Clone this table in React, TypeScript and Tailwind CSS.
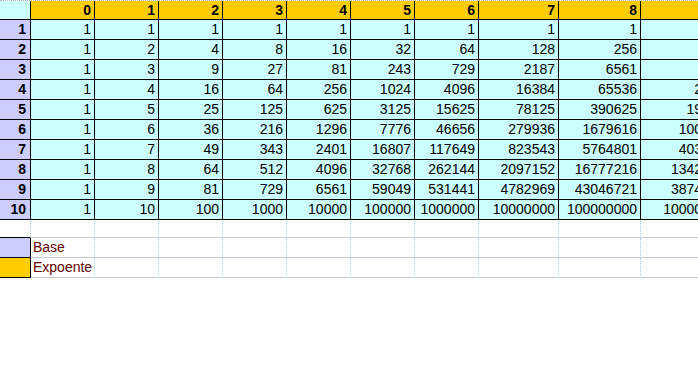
import React from "react";

const colClasses = [
  "w-[31px]",
  "w-[64px]",
  "w-[64px]",
  "w-[64px]",
  "w-[64px]",
  "w-[64px]",
  "w-[64px]",
  "w-[64px]",
  "w-[80px]",
  "w-[82px]",
  "w-[104px]",
];

const rows = [1, 2, 3, 4, 5, 6, 7, 8, 9, 10];
const exps = [0, 1, 2, 3, 4, 5, 6, 7, 8, 9];

const font = { fontFamily: '"Liberation Sans", Arial, sans-serif' };

export default function App() {
  return (
    <div
      className="w-[698px] h-[366px] overflow-hidden bg-white text-black"
      style={font}
    >
      <div className="w-[800px] border-t border-dotted border-[#b8b8c8]">
        {/* header row */}
        <div className="flex">
          <div className={`${colClasses[0]} shrink-0 h-[19px] bg-[#ccffff] border-r border-b border-black`} />
          {exps.map((e, i) => (
            <div
              key={e}
              className={`${colClasses[i + 1]} shrink-0 h-[19px] bg-[#ffcc00] border-r border-b border-black text-right pr-[3px] text-[14px] leading-[18px] font-bold`}
            >
              {e}
            </div>
          ))}
        </div>
        {rows.map((r) => (
          <div key={r} className="flex">
            <div className={`${colClasses[0]} shrink-0 h-[20px] bg-[#ccccff] border-r border-b border-black text-right pr-[4px] text-[14px] leading-[19px] font-bold`}>
              {r}
            </div>
            {exps.map((e, i) => (
              <div
                key={e}
                className={`${colClasses[i + 1]} shrink-0 h-[20px] bg-[#ccffff] border-r border-b border-black text-right pr-[3px] text-[14px] leading-[19px] whitespace-nowrap overflow-visible`}
              >
                {String(Math.pow(r, e))}
              </div>
            ))}
          </div>
        ))}
        {/* empty row */}
        <div className="flex">
          <div className={`${colClasses[0]} shrink-0 h-[18px] border-b border-b-black border-r border-r-[#b4c4ec] [border-right-style:dotted]`} />
          {exps.map((e, i) => (
            <div
              key={e}
              className={`${colClasses[i + 1]} shrink-0 h-[18px] border-b border-b-[#c8c8d4] border-r border-r-[#a8d0e8] [border-right-style:dotted]`}
            />
          ))}
        </div>
        {/* legend rows */}
        {[
          { label: "Base", color: "bg-[#ccccff]" },
          { label: "Expoente", color: "bg-[#ffcc00]" },
        ].map((row) => (
          <div key={row.label} className="flex">
            <div className={`${colClasses[0]} shrink-0 h-[20px] ${row.color} border-r border-b border-black`} />
            {exps.map((e, i) => (
              <div
                key={e}
                className={`${colClasses[i + 1]} shrink-0 h-[20px] border-b border-b-[#c8c8d4] border-r border-r-[#a8d0e8] [border-right-style:dotted] pl-[2px] text-[14px] leading-[19px] text-[#660000] whitespace-nowrap`}
              >
                {i === 0 ? row.label : ""}
              </div>
            ))}
          </div>
        ))}
      </div>
    </div>
  );
}
